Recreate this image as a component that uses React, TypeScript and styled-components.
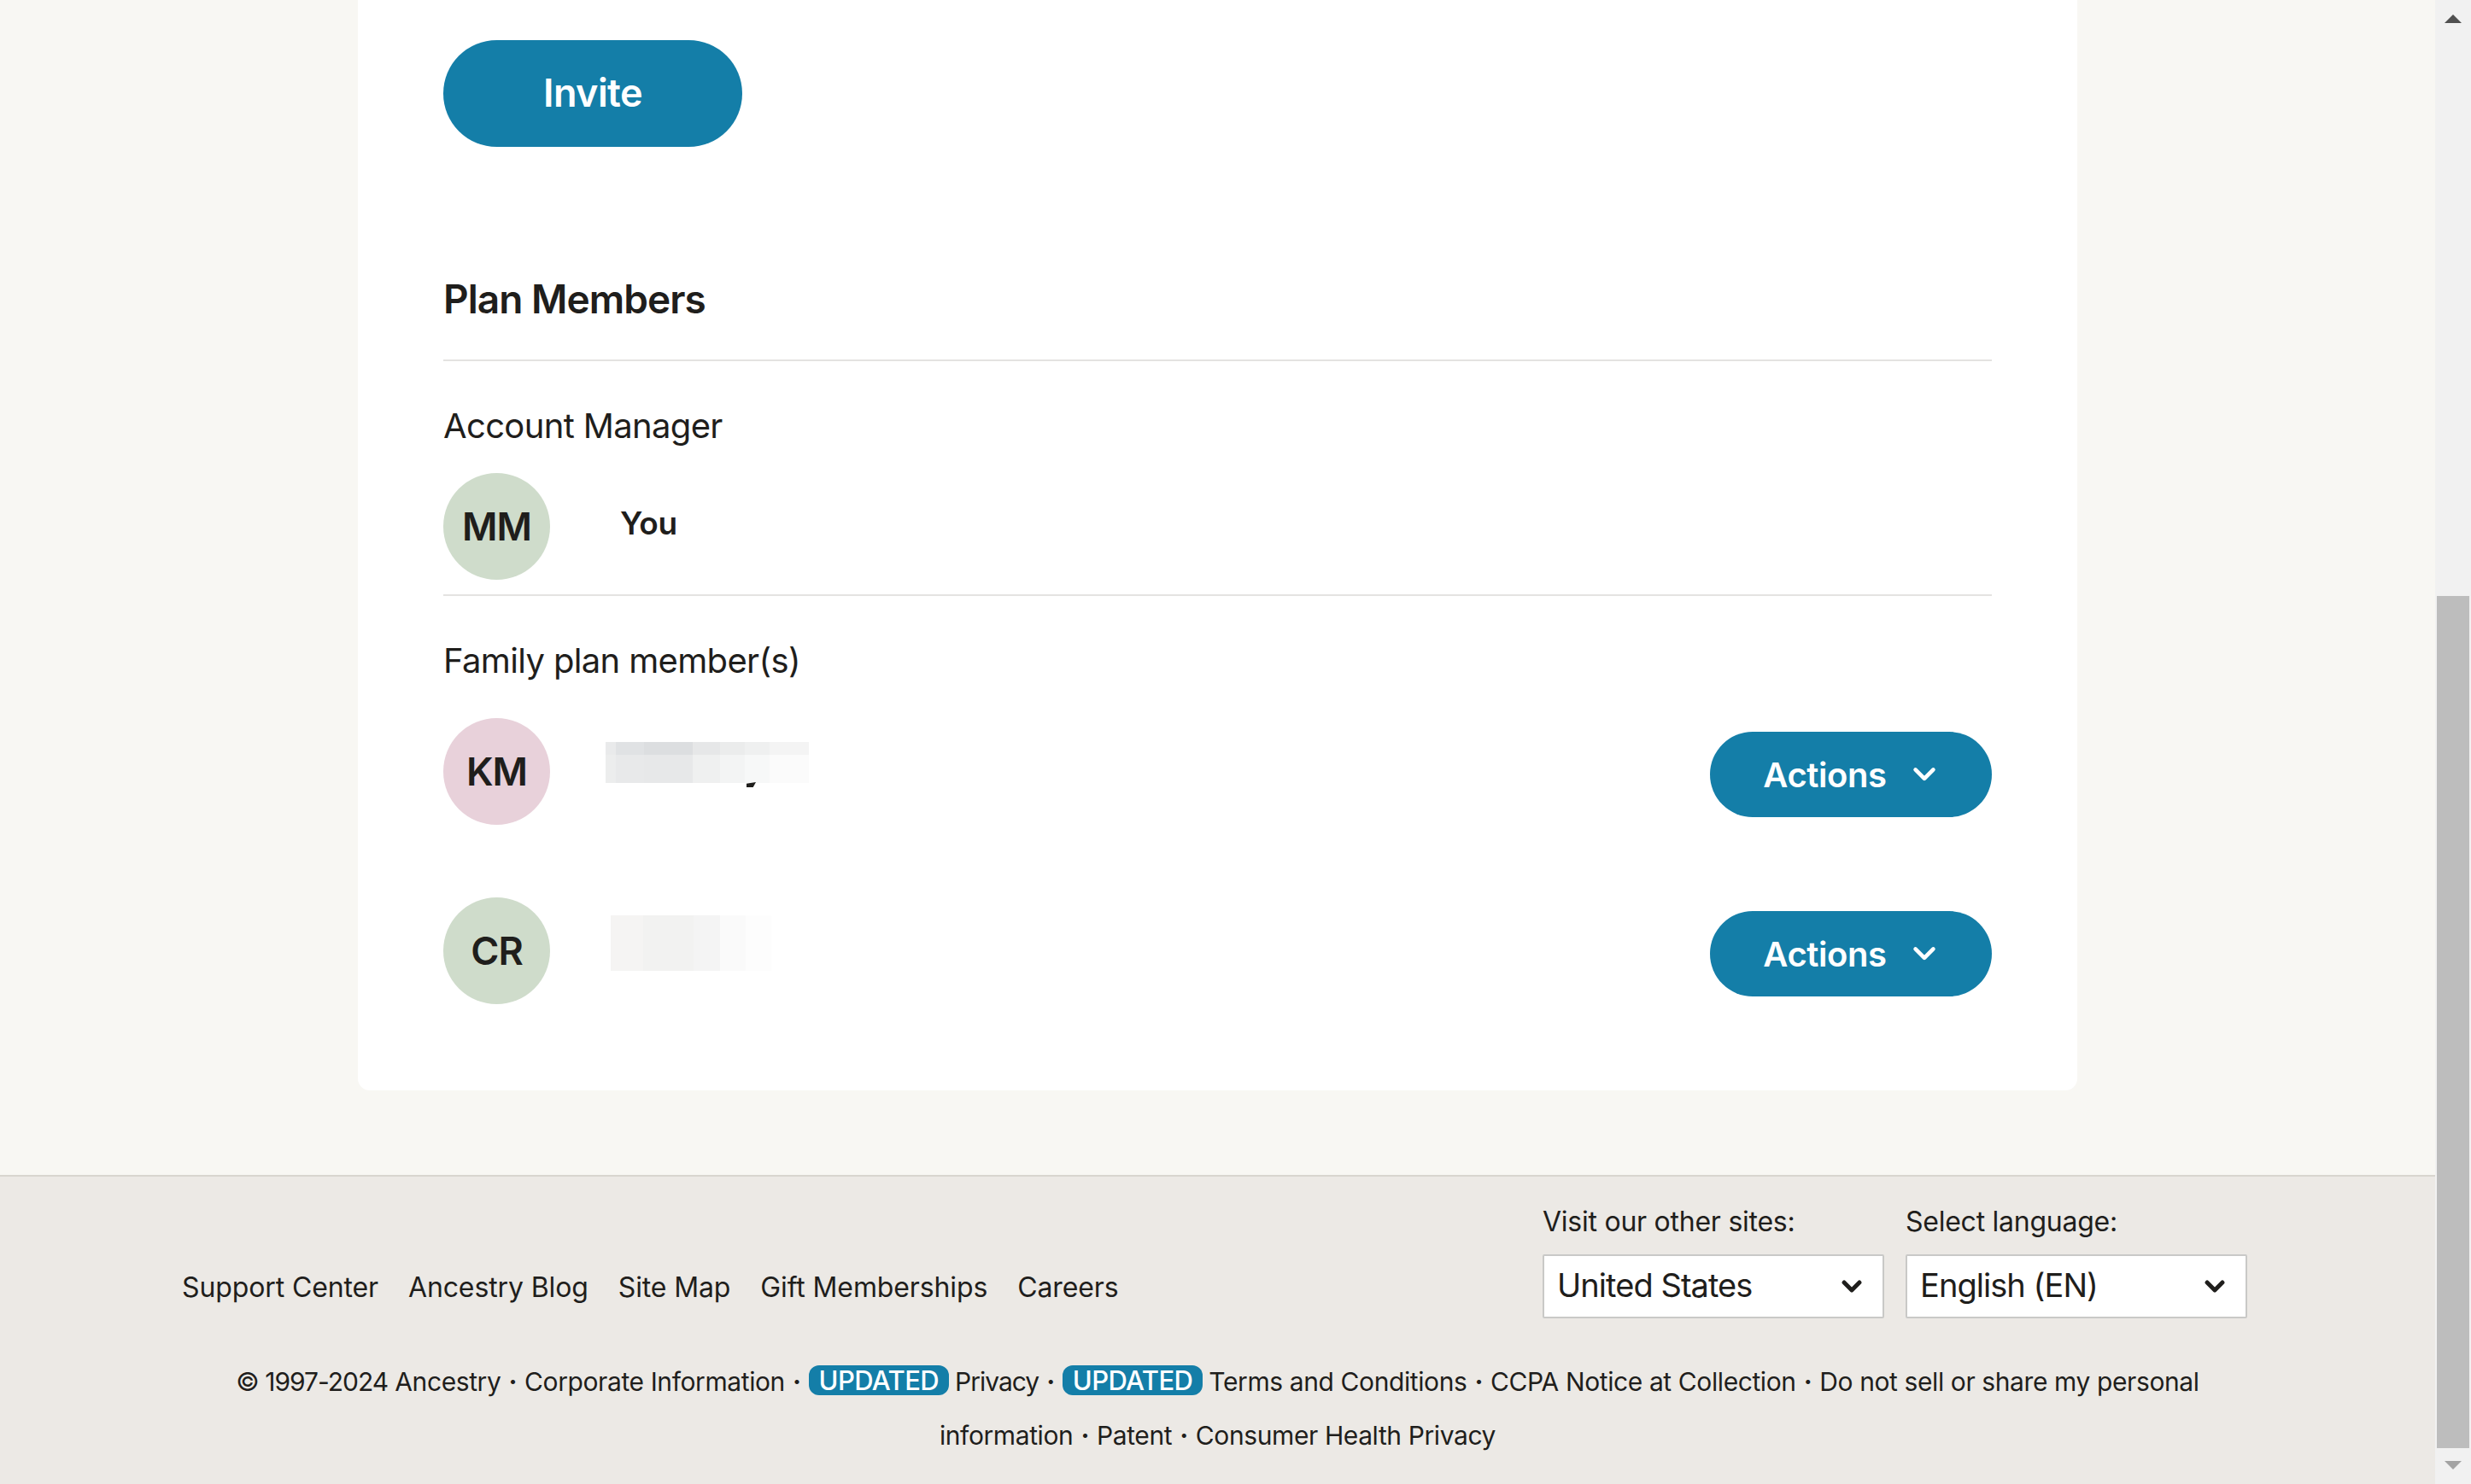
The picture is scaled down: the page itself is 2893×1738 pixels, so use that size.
import React from "react";
import styled, { createGlobalStyle } from "styled-components";

const Global = createGlobalStyle`
  html, body { margin: 0; padding: 0; height: 100%; overflow: hidden; }
  body { font-family: Inter, "Liberation Sans", Arial, sans-serif; color: #1f1e1c; background: #f8f7f3; }
  #root { height: 100%; }
`;

const Shell = styled.div`
  display: flex;
  height: 1738px;
  width: 2893px;
`;
const Page = styled.div`
  flex: 1;
  display: flex;
  flex-direction: column;
  min-width: 0;
`;
const Main = styled.main`
  height: 1376px;
  padding-left: 419px;
  box-sizing: border-box;
`;
const Card = styled.section`
  width: 2013px;
  height: 1277px;
  box-sizing: border-box;
  background: #fff;
  border-radius: 0 0 14px 14px;
  padding: 47px 100px 0;
`;
const PillButton = styled.button`
  display: flex;
  align-items: center;
  justify-content: center;
  border: 0;
  color: #fff;
  background: #147ea8;
  font-family: inherit;
  font-weight: 600;
  padding: 0;
`;
const InviteButton = styled(PillButton)`
  width: 350px;
  height: 125px;
  border-radius: 63px;
  font-size: 45px;
  letter-spacing: -0.6px;
  padding-bottom: 3px;
`;
const Title = styled.h2`
  margin: 0;
  height: 251px;
  box-sizing: border-box;
  padding-top: 150px;
  border-bottom: 2px solid #e4e3e1;
  font-size: 46px;
  line-height: 56px;
  font-weight: 600;
  letter-spacing: -0.95px;
`;
const Section = styled.div`
  display: flex;
  flex-direction: column;
`;
const SectionLabel = styled.h3`
  margin: 0;
  font-size: 40px;
  font-weight: 400;
  line-height: 50px;
  letter-spacing: -0.65px;
`;
const ManagerSection = styled(Section)`
  height: 275px;
  box-sizing: border-box;
  padding-top: 51px;
  border-bottom: 2px solid #e4e3e1;
`;
const MembersSection = styled(Section)`
  padding-top: 51px;
`;
const Row = styled.div<{ $top: number }>`
  display: flex;
  align-items: flex-start;
  margin-top: ${(p) => p.$top}px;
  height: 125px;
`;
const Avatar = styled.div<{ $bg: string }>`
  width: 125px;
  height: 125px;
  border-radius: 50%;
  flex: none;
  display: flex;
  align-items: center;
  justify-content: center;
  background: ${(p) => p.$bg};
  font-size: 45px;
  font-weight: 600;
  letter-spacing: -1px;
`;
const YouName = styled.span`
  margin-left: 82px;
  margin-top: 35px;
  line-height: 48px;
  font-size: 37px;
  font-weight: 600;
  letter-spacing: -0.4px;
`;
const BlurOne = styled.div`
  position: relative;
  margin-left: 65px;
  margin-top: 28px;
  width: 238px;
  height: 48px;
  background:
    linear-gradient(90deg, #eceded 0 12px, #e8e9ea 12px 45px, #e7e8e9 45px 102px, #eff0f0 102px 134px, #f3f4f4 134px 163px, #f7f8f8 163px 192px, #fbfbfb 192px 238px);
  &::before {
    content: "";
    position: absolute;
    inset: 0 0 auto 0;
    height: 15px;
    background: linear-gradient(90deg, #e9eaeb 0 12px, #e0e2e4 12px 45px, #dcdee0 45px 102px, #e6e7e8 102px 134px, #ebecec 134px 163px, #eff0f0 163px 192px, #f4f4f4 192px 238px);
  }
  &::after {
    content: "";
    position: absolute;
    left: 165px;
    top: 47px;
    width: 11px;
    height: 6px;
    background: #1f1e1c;
    clip-path: polygon(0 30%, 100% 0, 70% 100%, 0 100%);
  }
`;
const BlurTwo = styled.div`
  margin-left: 71px;
  margin-top: 21px;
  width: 188px;
  height: 65px;
  background: linear-gradient(90deg, #f5f4f3 0 38px, #f2f2f1 38px 97px, #f4f4f4 97px 128px, #fafafa 128px 158px, #fdfdfd 158px 188px);
`;
const ActionsButton = styled(PillButton)`
  margin-left: auto;
  margin-top: 16px;
  width: 330px;
  height: 100px;
  border-radius: 50px;
  font-size: 40px;
  gap: 30px;
  letter-spacing: -0.4px;
  padding-right: 3px;
`;
const Footer = styled.footer`
  height: 362px;
  box-sizing: border-box;
  background: #ece9e5;
  border-top: 2px solid #d8d5cf;
  display: flex;
  flex-direction: column;
`;
const FooterTop = styled.div`
  display: flex;
  justify-content: space-between;
  align-items: flex-end;
  padding: 32px 220px 0 213px;
  height: 166px;
  box-sizing: border-box;
`;
const FooterLinks = styled.nav`
  display: flex;
  gap: 35px;
  padding-bottom: 15px;
`;
const FooterLink = styled.a`
  font-size: 32px;
  line-height: 42px;
  letter-spacing: -0.12px;
`;
const Pickers = styled.div`
  display: flex;
  gap: 25px;
`;
const Picker = styled.div`
  display: flex;
  flex-direction: column;
  gap: 17px;
`;
const PickerLabel = styled.label`
  font-size: 32px;
  line-height: 42px;
  letter-spacing: -0.25px;
`;
const FakeSelect = styled.div`
  width: 400px;
  height: 75px;
  box-sizing: border-box;
  background: #fff;
  border: 2px solid #c9c9c7;
  border-radius: 2px;
  display: flex;
  align-items: center;
  justify-content: space-between;
  padding: 0 24px 0 15px;
`;
const SelectValue = styled.span`
  font-size: 38px;
  letter-spacing: -0.95px;
  margin-bottom: 3px;
`;
const Legal = styled.p`
  margin: 43px 0 0;
  padding: 0 240px;
  text-align: center;
  font-size: 30px;
  line-height: 63px;
  letter-spacing: -0.4px;
`;
const Tight = styled.span`
  letter-spacing: -1px;
`;
const Dot = styled.span`
  margin: 0 9px;
  font-weight: 700;
`;
const Badge = styled.span`
  display: inline-block;
  background: #147ea8;
  color: #fff;
  font-weight: 500;
  font-size: 31px;
  letter-spacing: -0.6px;
  line-height: 35px;
  border-radius: 12px;
  padding: 0 12px;
  margin-right: 7px;
  vertical-align: 1px;
`;
const ScrollBar = styled.aside`
  width: 42px;
  flex: none;
  background: #f1f1f1;
  display: flex;
  flex-direction: column;
  align-items: center;
`;
const ArrowUp = styled.div`
  margin-top: 17px;
  width: 0;
  height: 0;
  border-left: 10px solid transparent;
  border-right: 10px solid transparent;
  border-bottom: 10px solid #505050;
`;
const Thumb = styled.div`
  margin-top: 671px;
  width: 38px;
  height: 998px;
  background: #bdbdbd;
`;
const ArrowDown = styled.div`
  margin-top: 15px;
  width: 0;
  height: 0;
  border-left: 10px solid transparent;
  border-right: 10px solid transparent;
  border-top: 10px solid #a3a3a3;
`;

const Chevron = ({ size, stroke }: { size: number; stroke: number }) => (
  <svg width={size} height={size * 0.62} viewBox="0 0 24 15" fill="none" aria-hidden="true">
    <path d="M3 3l9 9 9-9" stroke="currentColor" strokeWidth={stroke} strokeLinecap="round" strokeLinejoin="round" />
  </svg>
);

export default function App() {
  return (
    <Shell>
      <Global />
      <Page>
        <Main>
          <Card>
            <InviteButton>Invite</InviteButton>
            <Title>Plan Members</Title>
            <ManagerSection>
              <SectionLabel>Account Manager</SectionLabel>
              <Row $top={30}>
                <Avatar $bg="#cfdccb">MM</Avatar>
                <YouName>You</YouName>
              </Row>
            </ManagerSection>
            <MembersSection>
              <SectionLabel>Family plan member(s)</SectionLabel>
              <Row $top={42}>
                <Avatar $bg="#e8d1da">KM</Avatar>
                <BlurOne />
                <ActionsButton>Actions<Chevron size={28} stroke={4} /></ActionsButton>
              </Row>
              <Row $top={85}>
                <Avatar $bg="#cfdccb">CR</Avatar>
                <BlurTwo />
                <ActionsButton>Actions<Chevron size={28} stroke={4} /></ActionsButton>
              </Row>
            </MembersSection>
          </Card>
        </Main>
        <Footer>
          <FooterTop>
            <FooterLinks>
              <FooterLink>Support Center</FooterLink>
              <FooterLink>Ancestry Blog</FooterLink>
              <FooterLink>Site Map</FooterLink>
              <FooterLink>Gift Memberships</FooterLink>
              <FooterLink>Careers</FooterLink>
            </FooterLinks>
            <Pickers>
              <Picker>
                <PickerLabel>Visit our other sites:</PickerLabel>
                <FakeSelect><SelectValue>United States</SelectValue><Chevron size={24} stroke={5} /></FakeSelect>
              </Picker>
              <Picker>
                <PickerLabel>Select language:</PickerLabel>
                <FakeSelect><SelectValue>English (EN)</SelectValue><Chevron size={24} stroke={5} /></FakeSelect>
              </Picker>
            </Pickers>
          </FooterTop>
          <Legal>
            <Tight>© 1997-2024</Tight> Ancestry<Dot>·</Dot>Corporate Information<Dot>·</Dot>
            <Badge>UPDATED</Badge><Tight>Privacy</Tight><Dot>·</Dot>
            <Badge>UPDATED</Badge>Terms and Conditions<Dot>·</Dot>CCPA Notice at Collection<Dot>·</Dot>Do not sell or share my personal information<Dot>·</Dot>Patent<Dot>·</Dot>Consumer Health Privacy
          </Legal>
        </Footer>
      </Page>
      <ScrollBar>
        <ArrowUp />
        <Thumb />
        <ArrowDown />
      </ScrollBar>
    </Shell>
  );
}
